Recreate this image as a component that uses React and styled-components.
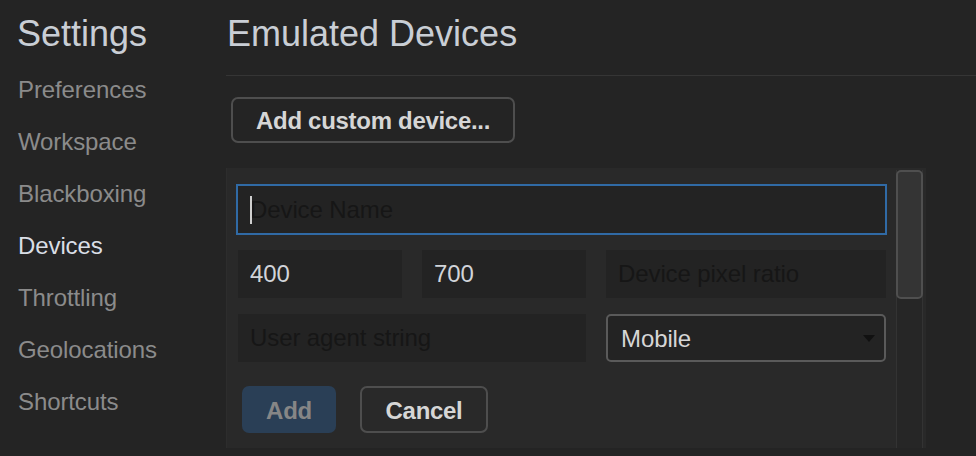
import React from "react";
import styled, { createGlobalStyle } from "styled-components";

const Global = createGlobalStyle`
  html, body { margin: 0; padding: 0; height: 100%; }
  body {
    background: #242424;
    font-family: "Liberation Sans", Arial, Helvetica, sans-serif;
    overflow: hidden;
  }
  #root { height: 100%; }
  * { box-sizing: border-box; }
`;

const Page = styled.div`
  display: flex;
  height: 456px;
  width: 976px;
  background: #242424;
`;

const Sidebar = styled.aside`
  width: 226px;
  flex: none;
  padding: 14px 0 0 17px;
`;

const Title = styled.h1`
  margin: 0;
  font-size: 36px;
  line-height: 40px;
  font-weight: 400;
  color: #c9ced5;
  letter-spacing: 0;
`;

const Nav = styled.nav`
  display: flex;
  flex-direction: column;
  margin-top: 10px;
  padding-left: 1px;
`;

const NavItem = styled.div`
  font-size: 24px;
  line-height: 52px;
  color: ${(p) => (p.$active ? "#d9dee6" : "#8b8b8b")};
  letter-spacing: -0.1px;
`;

const Main = styled.main`
  flex: 1;
  display: flex;
  flex-direction: column;
  padding-top: 14px;
  min-width: 0;
`;

const Header = styled.div`
  padding: 0 0 21px 1px;
  border-bottom: 1px solid #353535;
`;

const Toolbar = styled.div`
  display: flex;
  margin: 21px 0 0 5px;
`;

const Button = styled.button`
  font-family: inherit;
  font-weight: 700;
  font-size: 24px;
  letter-spacing: -0.3px;
  height: ${(p) => p.$h || 47}px;
  padding: 2px ${(p) => p.$px || 23}px 0;
  border-radius: 7px;
  cursor: pointer;
  border: ${(p) => (p.$primary ? "none" : "2px solid #4e4e4e")};
  background: ${(p) => (p.$primary ? "#2a3f56" : "transparent")};
  color: ${(p) => (p.$primary ? "#868686" : "#d6d6d6")};
  ${(p) => (p.$w ? `width: ${p.$w}px;` : "")}
`;

const Panel = styled.section`
  margin-top: 25px;
  width: 700px;
  height: 280px;
  background: #292929;
  border-left: 1px solid #2d2d2d;
  display: flex;
`;

const Form = styled.div`
  width: 648px;
  margin-left: 11px;
  padding-top: 16px;
  display: flex;
  flex-direction: column;
`;

const NameWrap = styled.div`
  position: relative;
  margin: 0 -1px 0 -2px;
`;

const Field = styled.input`
  display: block;
  width: 100%;
  height: ${(p) => p.$h || 48}px;
  font-family: inherit;
  font-size: 24px;
  color: #d1d4d9;
  background: #232323;
  border: ${(p) => (p.$focus ? "2px solid #306aa5" : "none")};
  padding: 0 12px;
  outline: none;
  letter-spacing: -0.1px;
  &::placeholder {
    color: #161616;
  }
`;

const Caret = styled.span`
  position: absolute;
  left: 14px;
  top: 12px;
  width: 2px;
  height: 28px;
  background: #cfcfcf;
`;

const Row = styled.div`
  display: grid;
  grid-template-columns: ${(p) => p.$cols};
  column-gap: 20px;
  margin-top: ${(p) => p.$mt}px;
`;

const SelectWrap = styled.div`
  position: relative;
  height: 48px;
`;

const Select = styled.select`
  appearance: none;
  -webkit-appearance: none;
  width: 100%;
  height: 100%;
  font-family: inherit;
  font-size: 24px;
  letter-spacing: -0.1px;
  color: #d6d6d6;
  background: #232323;
  border: 2px solid #5a5a5a;
  border-radius: 5px;
  padding: 0 13px;
  outline: none;
`;

const Arrow = styled.svg`
  position: absolute;
  right: 11px;
  top: 21px;
  pointer-events: none;
`;

const Actions = styled.div`
  display: flex;
  gap: 24px;
  margin: 24px 0 0 4px;
`;

const Scrollbar = styled.div`
  width: 27px;
  margin-left: 10px;
  margin-top: 2px;
  display: flex;
  flex-direction: column;
  border-left: 1px solid #333;
  border-right: 1px solid #333;
  background: #262626;
`;

const Thumb = styled.div`
  height: 129px;
  margin: 0 -1px;
  background: #343434;
  border: 2px solid #4f4f4f;
  border-radius: 5px;
`;

export default function App() {
  const nav = [
    "Preferences",
    "Workspace",
    "Blackboxing",
    "Devices",
    "Throttling",
    "Geolocations",
    "Shortcuts",
  ];
  return (
    <>
      <Global />
      <Page>
        <Sidebar>
          <Title>Settings</Title>
          <Nav>
            {nav.map((n) => (
              <NavItem key={n} $active={n === "Devices"}>
                {n}
              </NavItem>
            ))}
          </Nav>
        </Sidebar>
        <Main>
          <Header>
            <Title>Emulated Devices</Title>
          </Header>
          <Toolbar>
            <Button $h={46} $px={23}>Add custom device...</Button>
          </Toolbar>
          <Panel>
            <Form>
              <NameWrap>
                <Field $focus $h={51} placeholder="Device Name" readOnly />
                <Caret />
              </NameWrap>
              <Row $cols="164px 164px 1fr" $mt={15}>
                <Field defaultValue="400" />
                <Field defaultValue="700" />
                <Field placeholder="Device pixel ratio" />
              </Row>
              <Row $cols="348px 1fr" $mt={16}>
                <Field placeholder="User agent string" />
                <SelectWrap>
                  <Select defaultValue="Mobile">
                    <option>Mobile</option>
                    <option>Desktop</option>
                  </Select>
                  <Arrow width="12" height="7" viewBox="0 0 12 7">
                    <path d="M0 0 H12 L6 7 Z" fill="#111" />
                  </Arrow>
                </SelectWrap>
              </Row>
              <Actions>
                <Button $primary $w={94}>Add</Button>
                <Button $w={128} $px={0}>Cancel</Button>
              </Actions>
            </Form>
            <Scrollbar>
              <Thumb />
            </Scrollbar>
          </Panel>
        </Main>
      </Page>
    </>
  );
}
